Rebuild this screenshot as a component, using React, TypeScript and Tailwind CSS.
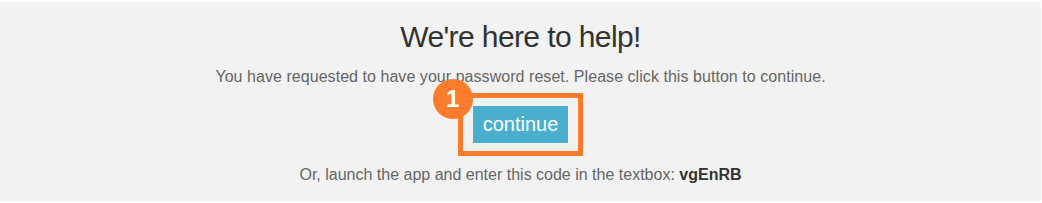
export default function App() {
  return (
    <div className="w-[1042px] h-[203px] bg-white pt-[2px] pr-[1px]">
      <div
        className="h-[199px] bg-[#f2f2f2] flex flex-col items-center text-center"
        style={{ fontFamily: '"Liberation Sans", Arial, sans-serif' }}
      >
        <h1 className="mt-[18px] text-[30px] leading-[34px] tracking-[-0.6px] text-[#333333] font-normal">
          We're here to help!
        </h1>
        <p className="mt-[14px] text-[16px] leading-[18px] tracking-[0.05px] text-[#666666]">
          You have requested to have your password reset. Please click this button to continue.
        </p>
        <div className="relative mt-[7px]">
          <div className="border-[5px] border-[#fd7b2c] px-[10px] py-[8px]">
            <button className="bg-[#4aafcd] text-white text-[20px] leading-[37px] px-[10px] h-[37px]">
              continue
            </button>
          </div>
          <div className="absolute left-[-25px] top-[-14px] w-[40px] h-[40px] rounded-full bg-[#fd7b2c] text-white font-bold text-[24px] leading-[40px]">
            1
          </div>
        </div>
        <p className="mt-[10px] text-[16px] leading-[18px] text-[#666666]">
          Or, launch the app and enter this code in the textbox:{' '}
          <span className="font-bold text-[#333333]">vgEnRB</span>
        </p>
      </div>
    </div>
  );
}
